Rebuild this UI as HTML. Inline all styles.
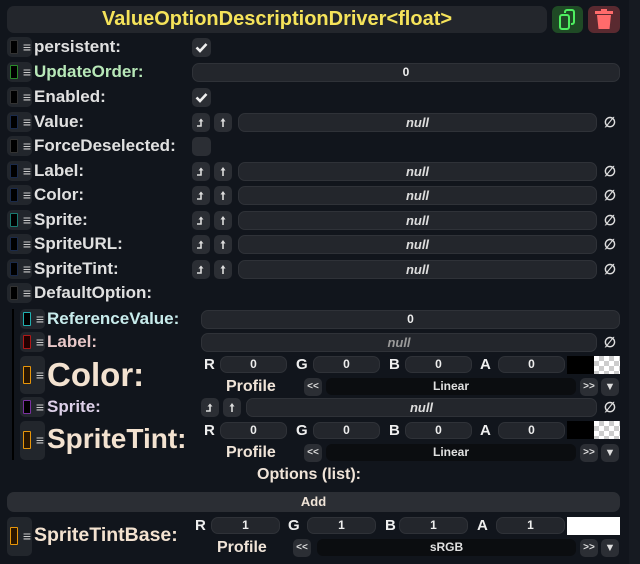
<!DOCTYPE html><html><head><meta charset="utf-8"><style>
*{margin:0;padding:0;box-sizing:border-box}
body{width:640px;height:564px;background:#11151c;position:relative;overflow:hidden;font-family:"Liberation Sans",sans-serif;font-weight:bold;color:#e0e0e0}
div{position:absolute}
.h{background:#22262c;border-radius:5px;width:25px}
.c{position:absolute;left:3px;width:8px;border:1.5px solid #333;background:#000;border-radius:1px}
.e{position:absolute;right:1px;font-size:14px;color:#ccc;line-height:1}
.t{font-size:17px;line-height:20px;white-space:nowrap}
.f{background:#23262c;border:1px solid #2f3238;border-radius:7px;height:19px;font-size:12px;text-align:center;line-height:17px;color:#eee}
.n{font-style:italic;color:#ddd;font-size:13px}
.b{background:#2b2e34;border-radius:5px;width:18px;height:19px;font-size:11px;text-align:center;line-height:19px;color:#ddd}
.k{width:19px;height:19px;background:#2b2e34;border-radius:5px}
.l{font-size:15px;color:#eee}
.p{font-size:16px;color:#f0e4d8}
.d{background:#0b0d10;border-radius:6px;height:17px;font-size:12px;text-align:center;line-height:17px}
.chk{background:#fff;background-image:linear-gradient(45deg,#ccc 25%,transparent 25%,transparent 75%,#ccc 75%),linear-gradient(45deg,#ccc 25%,transparent 25%,transparent 75%,#ccc 75%);background-size:10px 10px;background-position:0 0,5px 5px}
.z{background:none;font-size:14px}
</style></head><body>
<svg width="0" height="0" style="position:absolute"><defs>
<symbol id="ua" viewBox="0 0 18 19"><path d="M5 13h4V6.5" fill="none" stroke="#ddd" stroke-width="1.6"/><path d="M6.5 8.5L9 5.5l2.5 3z" fill="#ddd"/></symbol>
<symbol id="up" viewBox="0 0 18 19"><path d="M9 14V7" fill="none" stroke="#ddd" stroke-width="1.6"/><path d="M6.5 8.5L9 5l2.5 3.5z" fill="#ddd"/></symbol>
<symbol id="ck" viewBox="0 0 19 19"><path d="M4.5 9.5l3.5 3.5 6.5-7" fill="none" stroke="#eee" stroke-width="2.6"/></symbol>
</defs></svg>
<div style="left:629px;top:0;width:11px;height:564px;background:#161a21"></div>
<div style="left:7px;top:6px;width:540px;height:27px;background:#23262c;border-radius:7px;text-align:center;font-size:20px;line-height:27px;color:#f5e35a">ValueOptionDescriptionDriver&lt;float&gt;</div>
<div style="left:552px;top:6px;width:31px;height:27px;background:#1f4a25;border-radius:6px"><svg width="31" height="27"><rect x="8" y="9" width="9" height="14" rx="2" fill="none" stroke="#4ef060" stroke-width="2"/><path d="M13 7V6a2 2 0 0 1 2-2h5a2 2 0 0 1 2 2v10a2 2 0 0 1-2 2h-1" fill="none" stroke="#4ef060" stroke-width="2"/></svg></div>
<div style="left:588px;top:6px;width:32px;height:27px;background:#5a2a30;border-radius:6px"><svg width="32" height="27"><rect x="7" y="5" width="18" height="3" fill="#ff6b6b"/><rect x="13" y="3" width="6" height="3" fill="#ff6b6b"/><path d="M9 9h14l-1.5 14h-11z" fill="#ff6b6b"/></svg></div>

<div class="h" style="left:7px;top:37px;height:20px"><div class="c" style="top:3px;height:14px"></div><div class="e" style="top:3px">≡</div></div><div class="t" style="left:34px;top:37px">persistent:</div>
<div class="k" style="left:192px;top:38px"><svg width="19" height="19"><use href="#ck"/></svg></div>
<div class="h" style="left:7px;top:62px;height:20px"><div class="c" style="top:3px;height:14px;border-color:#2a8a2a"></div><div class="e" style="top:3px">≡</div></div><div class="t" style="left:34px;top:62px;color:#b8e8b8">UpdateOrder:</div>
<div class="f" style="left:192px;top:63px;width:428px">0</div>
<div class="h" style="left:7px;top:87px;height:20px"><div class="c" style="top:3px;height:14px"></div><div class="e" style="top:3px">≡</div></div><div class="t" style="left:34px;top:87px">Enabled:</div>
<div class="k" style="left:192px;top:88px"><svg width="19" height="19"><use href="#ck"/></svg></div>
<div class="h" style="left:7px;top:112px;height:20px"><div class="c" style="top:3px;height:14px;border-color:#1a2a4a"></div><div class="e" style="top:3px">≡</div></div><div class="t" style="left:34px;top:112px">Value:</div>
<div class="b" style="left:192px;top:113px"><svg width="18" height="19"><use href="#ua"/></svg></div><div class="b" style="left:214px;top:113px"><svg width="18" height="19"><use href="#up"/></svg></div><div class="f n" style="left:238px;top:113px;width:359px">null</div><div class="b z" style="left:601px;top:113px">∅</div>
<div class="h" style="left:7px;top:136px;height:20px"><div class="c" style="top:3px;height:14px"></div><div class="e" style="top:3px">≡</div></div><div class="t" style="left:34px;top:136px">ForceDeselected:</div>
<div class="k" style="left:192px;top:137px"></div>
<div class="h" style="left:7px;top:161px;height:20px"><div class="c" style="top:3px;height:14px;border-color:#1a2a4a"></div><div class="e" style="top:3px">≡</div></div><div class="t" style="left:34px;top:161px">Label:</div>
<div class="b" style="left:192px;top:162px"><svg width="18" height="19"><use href="#ua"/></svg></div><div class="b" style="left:214px;top:162px"><svg width="18" height="19"><use href="#up"/></svg></div><div class="f n" style="left:238px;top:162px;width:359px">null</div><div class="b z" style="left:601px;top:162px">∅</div>
<div class="h" style="left:7px;top:185px;height:20px"><div class="c" style="top:3px;height:14px;border-color:#1a2a4a"></div><div class="e" style="top:3px">≡</div></div><div class="t" style="left:34px;top:185px">Color:</div>
<div class="b" style="left:192px;top:186px"><svg width="18" height="19"><use href="#ua"/></svg></div><div class="b" style="left:214px;top:186px"><svg width="18" height="19"><use href="#up"/></svg></div><div class="f n" style="left:238px;top:186px;width:359px">null</div><div class="b z" style="left:601px;top:186px">∅</div>
<div class="h" style="left:7px;top:210px;height:20px"><div class="c" style="top:3px;height:14px;border-color:#1a7a70"></div><div class="e" style="top:3px">≡</div></div><div class="t" style="left:34px;top:210px">Sprite:</div>
<div class="b" style="left:192px;top:211px"><svg width="18" height="19"><use href="#ua"/></svg></div><div class="b" style="left:214px;top:211px"><svg width="18" height="19"><use href="#up"/></svg></div><div class="f n" style="left:238px;top:211px;width:359px">null</div><div class="b z" style="left:601px;top:211px">∅</div>
<div class="h" style="left:7px;top:234px;height:20px"><div class="c" style="top:3px;height:14px;border-color:#1a2a4a"></div><div class="e" style="top:3px">≡</div></div><div class="t" style="left:34px;top:234px">SpriteURL:</div>
<div class="b" style="left:192px;top:235px"><svg width="18" height="19"><use href="#ua"/></svg></div><div class="b" style="left:214px;top:235px"><svg width="18" height="19"><use href="#up"/></svg></div><div class="f n" style="left:238px;top:235px;width:359px">null</div><div class="b z" style="left:601px;top:235px">∅</div>
<div class="h" style="left:7px;top:259px;height:20px"><div class="c" style="top:3px;height:14px;border-color:#1a2a4a"></div><div class="e" style="top:3px">≡</div></div><div class="t" style="left:34px;top:259px">SpriteTint:</div>
<div class="b" style="left:192px;top:260px"><svg width="18" height="19"><use href="#ua"/></svg></div><div class="b" style="left:214px;top:260px"><svg width="18" height="19"><use href="#up"/></svg></div><div class="f n" style="left:238px;top:260px;width:359px">null</div><div class="b z" style="left:601px;top:260px">∅</div>
<div class="h" style="left:7px;top:283px;height:20px"><div class="c" style="top:3px;height:14px"></div><div class="e" style="top:3px">≡</div></div><div class="t" style="left:34px;top:283px">DefaultOption:</div>

<div style="left:12px;top:309px;width:2px;height:151px;background:#000"></div>
<div class="h" style="left:20px;top:309px;height:20px"><div class="c" style="top:3px;height:14px;border-color:#20b0b0"></div><div class="e" style="top:3px">≡</div></div><div class="t" style="left:47px;top:309px;color:#c8ecec">ReferenceValue:</div>
<div class="f" style="left:201px;top:310px;width:419px">0</div>
<div class="h" style="left:20px;top:332px;height:20px"><div class="c" style="top:3px;height:14px;border-color:#b01818;background:#200"></div><div class="e" style="top:3px">≡</div></div><div class="t" style="left:47px;top:332px;color:#e8c8c8">Label:</div>
<div class="f n" style="left:201px;top:333px;width:396px;color:#999">null</div><div class="b z" style="left:601px;top:333px">∅</div>

<div class="h" style="left:20px;top:356px;height:38px"><div class="c" style="top:10px;height:18px;border-color:#e8960a;background:#2a1600"></div><div class="e" style="top:12px">≡</div></div>
<div style="left:47px;top:355px;font-size:33px;line-height:40px;color:#f3e2d0">Color:</div>
<div class="l" style="left:204px;top:356px">R</div><div class="f" style="left:220px;top:356px;width:67px;height:17px;line-height:15px">0</div>
<div class="l" style="left:296px;top:356px">G</div><div class="f" style="left:313px;top:356px;width:67px;height:17px;line-height:15px">0</div>
<div class="l" style="left:389px;top:356px">B</div><div class="f" style="left:405px;top:356px;width:67px;height:17px;line-height:15px">0</div>
<div class="l" style="left:480px;top:356px">A</div><div class="f" style="left:498px;top:356px;width:67px;height:17px;line-height:15px">0</div>
<div style="left:567px;top:356px;width:27px;height:18px;background:#000"></div><div class="chk" style="left:594px;top:356px;width:26px;height:18px"></div>
<div class="p" style="left:226px;top:378px">Profile</div>
<div class="b" style="left:304px;top:378px;font-size:10px;height:18px;line-height:18px">&lt;&lt;</div><div class="d" style="left:326px;top:378px;width:250px">Linear</div><div class="b" style="left:580px;top:378px;font-size:10px;height:18px;line-height:18px">&gt;&gt;</div><div class="b" style="left:601px;top:378px;height:18px;line-height:18px">▼</div>

<div class="h" style="left:20px;top:397px;height:20px"><div class="c" style="top:3px;height:14px;border-color:#7a30a0"></div><div class="e" style="top:3px">≡</div></div><div class="t" style="left:47px;top:397px;color:#ddd0e8">Sprite:</div>
<div class="b" style="left:201px;top:398px"><svg width="18" height="19"><use href="#ua"/></svg></div><div class="b" style="left:223px;top:398px"><svg width="18" height="19"><use href="#up"/></svg></div><div class="f n" style="left:246px;top:398px;width:351px">null</div><div class="b z" style="left:601px;top:398px">∅</div>

<div class="h" style="left:20px;top:421px;height:39px"><div class="c" style="top:10px;height:18px;border-color:#e8960a;background:#2a1600"></div><div class="e" style="top:12px">≡</div></div>
<div style="left:47px;top:419px;font-size:28px;line-height:40px;color:#f3e2d0">SpriteTint:</div>
<div class="l" style="left:204px;top:422px">R</div><div class="f" style="left:220px;top:422px;width:67px;height:17px;line-height:15px">0</div>
<div class="l" style="left:296px;top:422px">G</div><div class="f" style="left:313px;top:422px;width:67px;height:17px;line-height:15px">0</div>
<div class="l" style="left:389px;top:422px">B</div><div class="f" style="left:405px;top:422px;width:67px;height:17px;line-height:15px">0</div>
<div class="l" style="left:480px;top:422px">A</div><div class="f" style="left:498px;top:422px;width:67px;height:17px;line-height:15px">0</div>
<div style="left:567px;top:421px;width:27px;height:18px;background:#000"></div><div class="chk" style="left:594px;top:421px;width:26px;height:18px"></div>
<div class="p" style="left:226px;top:444px">Profile</div>
<div class="b" style="left:304px;top:444px;font-size:10px;height:18px;line-height:18px">&lt;&lt;</div><div class="d" style="left:326px;top:444px;width:250px">Linear</div><div class="b" style="left:580px;top:444px;font-size:10px;height:18px;line-height:18px">&gt;&gt;</div><div class="b" style="left:601px;top:444px;height:18px;line-height:18px">▼</div>

<div class="p" style="left:257px;top:466px">Options (list):</div>
<div style="left:7px;top:492px;width:613px;height:20px;background:#2b2e34;border-radius:7px;text-align:center;font-size:13px;line-height:20px;color:#f0e4d8">Add</div>

<div class="h" style="left:7px;top:517px;height:39px"><div class="c" style="top:10px;height:18px;border-color:#e8960a;background:#2a1600"></div><div class="e" style="top:12px">≡</div></div>
<div style="left:34px;top:524px;font-size:19.5px;line-height:22px;color:#f3e2d0">SpriteTintBase:</div>
<div class="l" style="left:195px;top:517px">R</div><div class="f" style="left:211px;top:517px;width:69px;height:17px;line-height:15px">1</div>
<div class="l" style="left:288px;top:517px">G</div><div class="f" style="left:307px;top:517px;width:69px;height:17px;line-height:15px">1</div>
<div class="l" style="left:385px;top:517px">B</div><div class="f" style="left:399px;top:517px;width:69px;height:17px;line-height:15px">1</div>
<div class="l" style="left:477px;top:517px">A</div><div class="f" style="left:496px;top:517px;width:69px;height:17px;line-height:15px">1</div>
<div style="left:567px;top:517px;width:53px;height:18px;background:#fff"></div>
<div class="p" style="left:217px;top:539px">Profile</div>
<div class="b" style="left:293px;top:539px;font-size:10px;height:18px;line-height:18px">&lt;&lt;</div><div class="d" style="left:317px;top:539px;width:259px">sRGB</div><div class="b" style="left:580px;top:539px;font-size:10px;height:18px;line-height:18px">&gt;&gt;</div><div class="b" style="left:601px;top:539px;height:18px;line-height:18px">▼</div>
</body></html>
